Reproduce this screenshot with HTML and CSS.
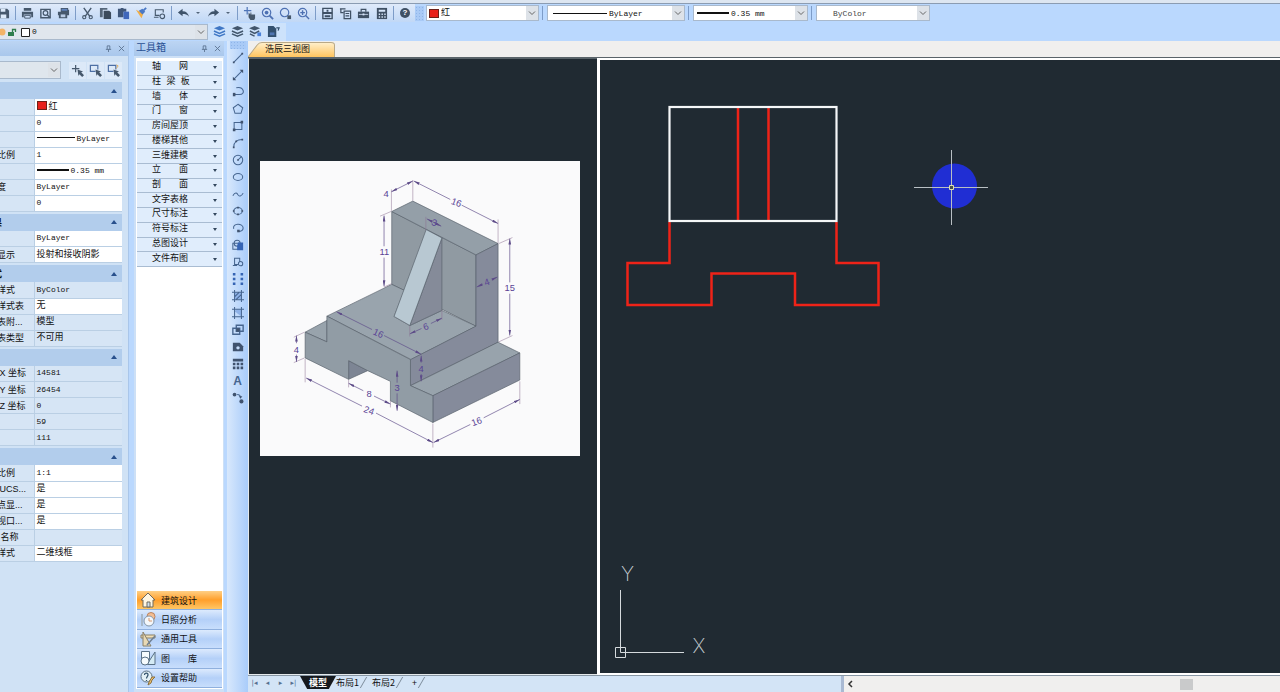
FILE: index.html
```html
<!DOCTYPE html>
<html lang="zh-CN">
<head>
    <meta charset="UTF-8">
    <meta name="viewport" content="width=device-width, initial-scale=1.0">
    <title>浩辰三视图</title>
    <link rel="stylesheet" href="styles.css">
</head>
<body>
    <svg class="defs" aria-hidden="true">
        <symbol id="chevron" viewBox="0 0 8 8"><path d="M1 2.500l3 3 3-3" fill="none" stroke="#666" /></symbol>
        <symbol id="pin" viewBox="0 0 8 8"><path d="M2.500 1h3v4M2.500 1v4M1 5h6M4 5v3" fill="none" stroke="#5a7290" /></symbol>
        <symbol id="close" viewBox="0 0 8 8"><path d="M1 1l6 6M7 1l-6 6" fill="none" stroke="#5a7290" /></symbol>
        <symbol id="layers" viewBox="0 0 14 14"><path d="M7 1l6 2.500L7 6 1 3.500z" fill="currentColor" /><path d="M1 6.500l6 2.500 6-2.500M1 9.500L7 12l6-2.500" fill="none" stroke="currentColor" stroke-width="1.600" /></symbol>
        <marker id="arrow" viewBox="0 0 18 8" refX="18" refY="4" markerWidth="18" markerHeight="9" markerUnits="userSpaceOnUse" orient="auto-start-reverse"><path d="M0 0l18 4-18 4z" fill="#5d4b88" /></marker>
    </svg>

    <header class="topbar">
        <div class="toolbar">
            <div class="tools main-tools">
                <button title="保存"><svg viewBox="0 0 14 14"><path d="M1 2h10l2 2v8H1z" fill="#46586c" /><path d="M4 2h5v3H4zM4 8h6v4H4z" fill="#dce9f8" /></svg></button>
                <i class="sep"></i>
                <button title="打印"><svg viewBox="0 0 14 14"><path d="M3 1h8v3H3zM1 5h12v6h-2V8H3v3H1z" fill="#46586c" /><path d="M4 9h6v3H4z" fill="none" stroke="#46586c" /></svg></button>
                <button title="打印预览"><svg viewBox="0 0 14 14"><path d="M2 2.500h10v9H2z" fill="none" stroke="#46586c" stroke-width="1.500" /><circle cx="7" cy="6.500" r="2.500" fill="none" stroke="#46586c" stroke-width="1.300" /><path d="M9 8.500l3 3" stroke="#46586c" stroke-width="1.500" /></svg></button>
                <button title="发布"><svg viewBox="0 0 14 14"><path d="M4 1h8v2h1v6h-2v3H2V9H1V5h3z" fill="#46586c" /><path d="M5 2h6v2H5z" fill="#5f83bd" /><path d="M4 8h5v3H4z" fill="#b8cbe4" /></svg></button>
                <i class="sep"></i>
                <button title="剪切"><svg viewBox="0 0 14 14"><path d="M3 1l6.500 9M11 1L4.500 10" stroke="#46586c" stroke-width="1.500" /><circle cx="3.500" cy="11" r="1.700" fill="none" stroke="#46586c" stroke-width="1.200" /><circle cx="10.500" cy="11" r="1.700" fill="none" stroke="#46586c" stroke-width="1.200" /></svg></button>
                <button title="复制"><svg viewBox="0 0 14 14"><path d="M1 1h8v2H4v8H1z" fill="#56677a" /><path d="M5 4h6l2 2v7H5z" fill="#3c4b5c" /></svg></button>
                <button title="粘贴"><svg viewBox="0 0 14 14"><path d="M1 2h3V1h3v1h3v3H7v6H1z" fill="#3f5678" /><path d="M7 5h6v8H7z" fill="#3f67bb" /></svg></button>
                <button title="特性匹配"><svg viewBox="0 0 14 14"><path d="M1 3l6 9 2-5z" fill="#f0ad45" /><path d="M4 4l4-2 3 3-3 3z" fill="#4a78c5" /><path d="M9 4l3-3" stroke="#4a78c5" stroke-width="2" /></svg></button>
                <button title="块编辑"><svg viewBox="0 0 14 14"><path d="M7 9H2.500V3H11v3M1 11h5" fill="none" stroke="#46586c" stroke-width="1.200" /><circle cx="10" cy="10" r="2.500" fill="none" stroke="#46586c" stroke-width="1.200" /></svg></button>
                <i class="sep"></i>
                <button title="放弃"><svg viewBox="0 0 14 14"><path d="M1 6l5-4v2.500c4 0 6 2 7 6-2-2.500-4-3-7-3V10z" fill="#3f536a" /></svg></button>
                <button class="more" title="放弃列表"></button>
                <button title="重做"><svg viewBox="0 0 14 14"><path d="M13 6L8 2v2.500c-4 0-6 2-7 6 2-2.500 4-3 7-3V10z" fill="#3f536a" /></svg></button>
                <button class="more" title="重做列表"></button>
                <i class="sep"></i>
                <button title="平移"><svg viewBox="0 0 14 14"><path d="M4.500 0v8M1 4h8" stroke="#4f75b8" stroke-width="1.300" /><path d="M6 6l2 2V6h1v2h4v4l-1 2H8L6 11z" fill="#46586c" /></svg></button>
                <button title="实时缩放"><svg viewBox="0 0 14 14"><circle cx="6" cy="6" r="4.500" fill="none" stroke="#4d70b2" stroke-width="1.300" /><circle cx="6" cy="6" r="2" fill="#4d70b2" /><path d="M9 9l4 4" stroke="#4d70b2" stroke-width="2" /></svg></button>
                <button title="窗口缩放"><svg viewBox="0 0 14 14"><circle cx="6" cy="6" r="4.500" fill="none" stroke="#4d70b2" stroke-width="1.300" /><path d="M9 9h4v4H9z" fill="#46586c" /></svg></button>
                <button title="缩放上一个"><svg viewBox="0 0 14 14"><circle cx="6" cy="6" r="4.500" fill="none" stroke="#4d70b2" stroke-width="1.300" /><path d="M3.500 6h5M6 3.500v5M9 9l4 4" stroke="#4d70b2" stroke-width="1.500" /></svg></button>
                <i class="sep"></i>
                <button title="特性"><svg viewBox="0 0 14 14"><path d="M2 1.500h10v11H2z" fill="none" stroke="#3f5064" stroke-width="1.500" /><path d="M2 6.500h10M4 10h6M6 4h2" stroke="#3f5064" stroke-width="2" /></svg></button>
                <button title="设计中心"><svg viewBox="0 0 14 14"><path d="M1 2h6M2 2v4h3" fill="none" stroke="#3f5064" stroke-width="1.300" /><path d="M5.500 4.500h7v8h-7zM7 7h4M7 9.500h4" fill="none" stroke="#3f5064" stroke-width="1.300" /></svg></button>
                <button title="工具选项板"><svg viewBox="0 0 14 14"><path d="M1 5h12v7H1z" fill="#3f5064" /><path d="M4.500 5V2.500h5V5" fill="none" stroke="#3f5064" stroke-width="1.300" /><path d="M2 8h10" stroke="#d5e4f8" stroke-width=".8" /><path d="M6 7h2v2H6z" fill="#d5e4f8" /></svg></button>
                <button title="计算器"><svg viewBox="0 0 14 14"><path d="M2 1h11v12H2z" fill="#3f5064" /><path d="M4 3h7v2H4zM4 7h1.500v1.500H4zM7 7h1.500v1.500H7zM10 7h1.500v1.500H10zM4 10h1.500v1.500H4zM7 10h1.500v1.500H7zM10 10h1.500v1.500H10z" fill="#d5e4f8" /></svg></button>
                <i class="sep"></i>
                <button class="help" title="帮助"><span>?</span></button>
            </div>
            <i class="grip"></i>
            <label class="combo color-combo"><i class="swatch"></i><select class="cjk" aria-label="颜色"><option>红</option></select><svg><use href="#chevron" /></svg></label>
            <i class="sep"></i>
            <label class="combo type-combo"><i class="line"></i><select aria-label="线型"><option>ByLayer</option></select><svg><use href="#chevron" /></svg></label>
            <i class="sep"></i>
            <label class="combo weight-combo"><i class="line thick"></i><select aria-label="线宽"><option>0.35 mm</option></select><svg><use href="#chevron" /></svg></label>
            <i class="sep"></i>
            <label class="combo style-combo"><select aria-label="打印样式" disabled><option>ByColor</option></select><svg><use href="#chevron" /></svg></label>
        </div>
        <div class="toolbar">
            <label class="combo layer-combo">
                <svg class="layer-state" viewBox="0 0 32 12"><circle cx="2" cy="6" r="3.500" fill="#f3b467" /><path d="M8 6h6v4H8z" fill="#2f7d4c" /><path d="M12.500 6V3.500h3V6" fill="none" stroke="#2f7d4c" stroke-width="1.300" /><path d="M21.500 2.500h8v8h-8z" fill="#fff" stroke="#222" /></svg>
                <select aria-label="图层"><option>0</option></select><svg><use href="#chevron" /></svg>
            </label>
            <div class="tools layer-tools">
                <button class="blue" title="图层特性"><svg><use href="#layers" /></svg></button>
                <button title="图层上一个"><svg><use href="#layers" /></svg></button>
                <button title="图层隔离"><svg viewBox="0 0 14 14"><path d="M6 1l6 2.500L6 6 0 3.500z" fill="#42566c" /><path d="M1 6.500l5 2.500 5-2.500M1 9.500L6 12" fill="none" stroke="#42566c" stroke-width="1.600" /><path d="M9 8h4v4H9z" fill="#4d82d8" /></svg></button>
                <button title="图层状态"><svg viewBox="0 0 14 14"><path d="M1 1h6l3 3v9H1z" fill="#33506e" /><path d="M3 8h5v3H3z" fill="#5076b2" /><path d="M10 3h3l-1 3" fill="none" stroke="#33506e" stroke-width="1.300" /></svg></button>
            </div>
        </div>
    </header>

    <main class="workspace">
        <aside class="properties">
            <div class="panel-title"><span></span><button title="自动隐藏"><svg><use href="#pin" /></svg></button><button title="关闭"><svg><use href="#close" /></svg></button></div>
            <div class="picker">
                <label class="combo object-combo"><select aria-label="对象"><option></option></select><svg><use href="#chevron" /></svg></label>
                <button title="切换选择"><svg viewBox="0 0 14 14"><path d="M5 1v8M1 5h8" stroke="#46586c" stroke-width="1.300" /><path d="M7 6l6 2-2 1 3 3-2 2-3-3-1 2z" fill="#46586c" /></svg></button>
                <button title="选择对象"><svg viewBox="0 0 14 14"><path d="M7 8H1.500V1.500h8V6" fill="none" stroke="#4d6fa4" stroke-width="1.300" /><path d="M7 6l6 2-2 1 3 3-2 2-3-3-1 2z" fill="#46586c" /></svg></button>
                <button title="快速选择"><svg viewBox="0 0 14 14"><path d="M7 8H1.500V1.500h8V6" fill="none" stroke="#4d6fa4" stroke-width="1.300" /><path d="M10 1l2 1-2 3" fill="none" stroke="#e0ae62" /><path d="M7 6l6 2-2 1 3 3-2 2-3-3-1 2z" fill="#46586c" /></svg></button>
            </div>
            <section>
                <button class="section-head">基本</button>
                <table>
                    <tr><th>颜色</th><td class="cjk"><i class="swatch"></i>红</td></tr>
                    <tr><th>图层</th><td>0</td></tr>
                    <tr><th>线型</th><td><i class="line"></i>ByLayer</td></tr>
                    <tr><th>线型比例</th><td>1</td></tr>
                    <tr><th>线宽</th><td><i class="line thick"></i>0.35 mm</td></tr>
                    <tr><th>透明度</th><td>ByLayer</td></tr>
                    <tr><th>厚度</th><td>0</td></tr>
                </table>
            </section>
            <section>
                <button class="section-head">三维效果</button>
                <table>
                    <tr><th>材质</th><td>ByLayer</td></tr>
                    <tr><th>阴影显示</th><td class="cjk">投射和接收阴影</td></tr>
                </table>
            </section>
            <section>
                <button class="section-head">打印样式</button>
                <table>
                    <tr class="locked"><th>打印样式</th><td>ByColor</td></tr>
                    <tr><th>打印样式表</th><td class="cjk">无</td></tr>
                    <tr class="locked"><th>打印表附...</th><td class="cjk">模型</td></tr>
                    <tr class="locked"><th>打印表类型</th><td class="cjk">不可用</td></tr>
                </table>
            </section>
            <section>
                <button class="section-head">视图</button>
                <table>
                    <tr class="locked"><th>圆心 X 坐标</th><td>14581</td></tr>
                    <tr class="locked"><th>圆心 Y 坐标</th><td>26454</td></tr>
                    <tr class="locked"><th>圆心 Z 坐标</th><td>0</td></tr>
                    <tr class="locked"><th>高度</th><td>59</td></tr>
                    <tr class="locked"><th>宽度</th><td>111</td></tr>
                </table>
            </section>
            <section>
                <button class="section-head">其他</button>
                <table>
                    <tr><th>注释比例</th><td>1:1</td></tr>
                    <tr><th>打开 UCS...</th><td class="cjk">是</td></tr>
                    <tr><th>在原点显...</th><td class="cjk">是</td></tr>
                    <tr><th>每个视口...</th><td class="cjk">是</td></tr>
                    <tr class="locked"><th>UCS 名称</th><td></td></tr>
                    <tr><th>视觉样式</th><td class="cjk">二维线框</td></tr>
                </table>
            </section>
        </aside>

        <aside class="toolbox">
            <div class="panel-title"><span>工具箱</span><button title="自动隐藏"><svg><use href="#pin" /></svg></button><button title="关闭"><svg><use href="#close" /></svg></button></div>
            <div class="toolbox-body">
                <div class="menu-list">
                    <button>轴　　网</button>
                    <button>柱 梁 板</button>
                    <button>墙　　体</button>
                    <button>门　　窗</button>
                    <button>房间屋顶</button>
                    <button>楼梯其他</button>
                    <button>三维建模</button>
                    <button>立　　面</button>
                    <button>剖　　面</button>
                    <button>文字表格</button>
                    <button>尺寸标注</button>
                    <button>符号标注</button>
                    <button>总图设计</button>
                    <button>文件布图</button>
                </div>
                <div class="group-list">
                    <button class="active"><svg viewBox="0 0 16 16"><path d="M1 8l7-7 7 7h-2v7H3V8z" fill="#fff6e2" stroke="#6f6a5e" /><path d="M7 15v-5h3v5z" fill="#cfe0ee" stroke="#6f6a5e" /></svg>建筑设计</button>
                    <button><svg viewBox="0 0 16 16"><circle cx="11" cy="4.500" r="4" fill="#f4bd91" stroke="#b98462" /><circle cx="9" cy="9" r="5" fill="#f3f7fb" stroke="#8496a8" /><path d="M2 2v12" stroke="#a8b9ca" stroke-width="2" /><path d="M9 6v3h3" fill="none" stroke="#d79a72" /></svg>日照分析</button>
                    <button><svg viewBox="0 0 16 16"><path d="M1 4h14v3H1z" fill="#f0dfb7" stroke="#8a8069" /><path d="M3 1v14h8z" fill="#e8d9b5" stroke="#8a8069" /><path d="M15 5L7 14" stroke="#6e7f93" stroke-width="1.500" /></svg>通用工具</button>
                    <button><svg viewBox="0 0 16 16"><path d="M1.500 1.500h8v8h-8z" fill="#f6fbfd" stroke="#5a7186" /><path d="M15 2v12.500H7z" fill="#d5ebf5" stroke="#5a7186" /><circle cx="5" cy="11" r="4" fill="#f6fbfd" stroke="#5a7186" /></svg>图　　库</button>
                    <button><svg viewBox="0 0 16 16"><circle cx="6.500" cy="6.500" r="5.500" fill="#e4f1f6" stroke="#5c7182" /><path d="M4.500 5c0-3 4-2 3.500 0S6.500 7 6.500 8.500M6.500 10v1" fill="none" stroke="#35546e" stroke-width="1.200" /><path d="M15 7l-3 3-1 3-3 2 1-3 3-5z" fill="#f0c46f" stroke="#8c7140" /></svg>设置帮助</button>
                </div>
            </div>
        </aside>

        <nav class="draw-tools">
            <i class="grip"></i>
            <button title="直线"><svg viewBox="0 0 14 14"><path d="M2 12L12 2" /><path class="solid" d="M1 11h2v2H1zM11 1h2v2h-2z" /></svg></button>
            <button title="构造线"><svg viewBox="0 0 14 14"><path d="M2 12L12 2" /><path class="solid" d="M1 9v4h4zM9 1h4v4z" /></svg></button>
            <button title="多段线"><svg viewBox="0 0 14 14"><path d="M5 2c9-2 11 8 4 8H3" /><path class="solid" d="M1 8h3v4H1z" /></svg></button>
            <button title="多边形"><svg viewBox="0 0 14 14"><path d="M7 1.500l5.500 4-2 6.500h-7l-2-6.500z" /></svg></button>
            <button title="矩形"><svg viewBox="0 0 14 14"><path d="M2.500 3h9v8h-9z" /><path class="solid" d="M1 10h3v3H1zM10 1h3v3h-3z" /></svg></button>
            <button title="圆弧"><svg viewBox="0 0 14 14"><path d="M2 12c0-6 4-9 10-9" /><path class="solid" d="M1 11h2v2H1zM4 4h2v2H4zM11 2h2v2h-2z" /></svg></button>
            <button title="圆"><svg viewBox="0 0 14 14"><circle cx="7" cy="7" r="5.500" /><path d="M7 7l4-4" /><path class="solid" d="M6 6h2v2H6z" /></svg></button>
            <button title="椭圆"><svg viewBox="0 0 14 14"><ellipse cx="7" cy="7" rx="5.500" ry="4" /></svg></button>
            <button title="样条曲线"><svg viewBox="0 0 14 14"><path d="M1 9c3-5 5-3 6-1s4 2 6-2" /></svg></button>
            <button title="椭圆弧"><svg viewBox="0 0 14 14"><ellipse cx="7" cy="7" rx="5" ry="4" /><path class="solid" d="M6 2h2v2H6zM6 10h2v2H6zM1 6h2v2H1zM11 6h2v2h-2z" /></svg></button>
            <button title="部分椭圆"><svg viewBox="0 0 14 14"><path d="M2 8c-2-7 11-7 11-1 0 3-3 4-6 4" /><path class="solid" d="M6 9h3v3H6z" /></svg></button>
            <button title="插入块"><svg viewBox="0 0 14 14"><circle cx="6" cy="5" r="3.500" /><path d="M1 5h7v7H1z" /><path class="solid blue" d="M7 4h6v9H6V8z" /></svg></button>
            <button title="创建块"><svg viewBox="0 0 14 14"><path d="M9 7V2.500H3V10h4M1 11h5" /><circle cx="10" cy="9" r="2.500" /></svg></button>
            <button title="点"><svg viewBox="0 0 14 14"><path class="solid blue" d="M1 0h3v3H1zM10 0h3v3h-3zM1 5.500h3v3H1zM10 5.500h3v3h-3zM1 11h3v3H1zM10 11h3v3h-3z" /></svg></button>
            <button title="图案填充"><svg viewBox="0 0 14 14"><path class="fill" d="M3 3h8v8H3z" /><path d="M3 0v14M11 0v14M0 2.500h14M0 11.500h14M3 8l5-5M5 11l6-6" /></svg></button>
            <button title="渐变色"><svg viewBox="0 0 14 14"><path class="fill" d="M5 3h6v8L3 5z" /><path d="M3 0v14M11 0v14M0 2.500h14M0 11.500h14" /></svg></button>
            <button title="面域"><svg viewBox="0 0 14 14"><path d="M5 1.500h8v7H5zM1 5h8v7H1z" stroke-width="1.600" /><path class="solid" d="M5 5h4v4H5z" /></svg></button>
            <button title="区域覆盖"><svg viewBox="0 0 14 14"><path class="solid" d="M1 2h8l4 4v6H1z" /><circle class="hole" cx="7" cy="8" r="2" /></svg></button>
            <button title="表格"><svg viewBox="0 0 14 14"><path class="solid" d="M1 1h12v3H1zM1 5.500h3v3H1zM5.500 5.500h3v3h-3zM10 5.500h3v3h-3zM1 10h3v3H1zM5.500 10h3v3h-3zM10 10h3v3h-3z" /></svg></button>
            <button class="letter" title="多行文字">A</button>
            <button title="添加选定对象"><svg viewBox="0 0 14 14"><circle class="solid" cx="3" cy="3" r="2.200" /><circle class="solid" cx="11" cy="11" r="2.400" /><path d="M6 3c3 0 4 1 4 4" /><path class="solid" d="M8 5h4l-2 3z" /></svg></button>
        </nav>

        <div class="document">
            <div class="doc-tabs">
                <button class="doc-tab"><svg viewBox="0 0 87 14" preserveAspectRatio="none"><defs><linearGradient id="tabFill" x2="0" y2="1"><stop offset="0" stop-color="#fff0cd" /><stop offset="1" stop-color="#ffc45e" /></linearGradient></defs><path d="M0 14L9 3Q11 .5 14 .5H83Q86.500.5 86.500 3V14" fill="url(#tabFill)" stroke="#b9a987" /></svg><span>浩辰三视图</span></button>
            </div>
            <div class="canvas">
                <div class="viewport reference">
                    <svg class="solid-view" viewBox="-87 -27 957 882">
                        <g stroke="#59616c" stroke-width="2" stroke-linejoin="round">
                            <path d="M48 485L113 450V514z" fill="#98a3ac" />
                            <path d="M178 570L235 600L178 626z" fill="#7d8594" />
                            <path d="M307 124L559 254V467L307 342z" fill="#909aa2" />
                            <path d="M307 124L370 93L625 220L559 254z" fill="#949fa8" />
                            <path d="M113 437L307 342L345 360L314 438L361 465L457 420L559 467L365 567z" fill="#99a4ad" />
                            <path d="M314 438L345 360L457 420L361 465z" fill="#99a4ad" stroke="none" />
                            <path d="M559 254L625 220V515L363 645V567L559 467z" fill="#858b9b" />
                            <path d="M363 645L625 515L690 547L430 675z" fill="#98a3ac" />
                            <path d="M430 675L690 547V628L430 755z" fill="#858b9b" />
                            <path d="M48 485L113 514V437L363 567V645L430 675V755L303 690V632L235 600L178 570V626L48 562z" fill="#919ca5" />
                            <path d="M457 203V420L361 465z" fill="#858b99" />
                            <path d="M410 178L457 203L361 465L314 438z" fill="#b8c8d2" />
                        </g>
                        <path class="extension" d="M306 122V58M370 92V30M625 218V148M627 220L668 202M627 514L668 495M272 138L305 124M284 350L306 340M48 565V635M430 758V830M690 632V700M14 500L46 485M14 576L46 562M178 628V650M303 690V710M409 180V140M361 467V498M457 420V448" />
                        <g class="dimension">
                            <path d="M306 65L370 33" />
                            <path d="M373 33L482 88M516 105L625 160" />
                            <path d="M284 136V228M284 262V348" />
                            <path d="M660 205V336M660 370V495" />
                            <path d="M51 622L218 706M260 727L430 815" />
                            <path d="M432 815L542 761M582 741L690 686" />
                            <path d="M22 495V518M22 552V574" />
                            <path d="M178 638L222 660M254 676L303 700" />
                            <path d="M142 424L248 477M284 495L395 551" />
                            <path d="M395 555V576M395 610V632" />
                            <path d="M361 490L396 474M424 459L457 443" />
                            <path d="M561 350L580 341M606 328L623 320" />
                            <path d="M412 146L455 168" />
                            <path d="M323 600V636M323 668V720" />
                        </g>
                        <g class="dim-text">
                            <text x="290" y="82">4</text>
                            <text transform="translate(497 106) rotate(20)">16</text>
                            <text x="285" y="254">11</text>
                            <text x="660" y="362">15</text>
                            <text transform="translate(595 344) rotate(-20)">4</text>
                            <text transform="translate(431 166) rotate(20)">3</text>
                            <text transform="translate(412 477) rotate(-20)">6</text>
                            <text transform="translate(263 497) rotate(25)">16</text>
                            <text x="22" y="546">4</text>
                            <text x="395" y="604">4</text>
                            <text x="323" y="662">3</text>
                            <text x="239" y="680">8</text>
                            <text transform="translate(236 728) rotate(20)">24</text>
                            <text transform="translate(564 761) rotate(-20)">16</text>
                        </g>
                    </svg>
                </div>
                <div class="viewport model">
                    <svg class="drawing">
                        <g fill="none" stroke="#ee2318" stroke-width="2.500">
                            <path d="M138 47V161M168.500 47V161" />
                            <path d="M69.500 162V203H27.500V245H111.500V213.500H195V245H278.500V203H236.500V162" />
                        </g>
                        <rect x="69.500" y="47" width="167" height="114" fill="none" stroke="#f5f7f8" stroke-width="2.200" />
                        <circle cx="354.500" cy="126" r="22.500" fill="#202ed3" />
                        <path d="M314 127.500H388M351.500 90V165" stroke="#b9c0c4" />
                        <path d="M349.500 125.500h4v4h-4z" fill="#46504f" stroke="#dedfae" />
                    </svg>
                    <svg class="ucs" viewBox="0 0 100 100">
                        <path d="M5.500 80.500h10v10h-10zM10.500 85.500V23M10.500 85.500H74" fill="none" stroke="#d5dadd" />
                        <text x="17.500" y="14">Y</text>
                        <text x="89" y="86">X</text>
                    </svg>
                </div>
            </div>
            <footer class="statusbar">
                <div class="layout-tabs">
                    <button class="nav-arrow">|◂</button><button class="nav-arrow">◂</button><button class="nav-arrow">▸</button><button class="nav-arrow">▸|</button>
                    <button class="layout current">模型</button>
                    <button class="layout">布局1</button>
                    <button class="layout">布局2</button>
                    <button class="layout add">+</button>
                </div>
                <div class="scrollbar">
                    <button title="向左滚动"><svg viewBox="0 0 8 8"><path d="M6 1L3 4l3 3" fill="none" stroke="#333" stroke-width="1.500" /></svg></button>
                    <i class="thumb"></i>
                </div>
            </footer>
        </div>
    </main>
</body>
</html>
```
FILE: styles.css
```css
*, *::before, *::after {
    box-sizing: border-box;
}

body {
    margin: 0;
    height: 100vh;
    display: flex;
    flex-direction: column;
    overflow: hidden;
    background-color: #bad8fe;
    font: 8px "Liberation Mono", "Noto Sans CJK SC", monospace;
    color: #111;
}

button {
    padding: 0;
    border: 0;
    background: none;
    font: inherit;
    color: inherit;
}

i {
    font-style: normal;
    flex: none;
}

.defs {
    position: absolute;
    width: 0;
    height: 0;
}

/* toolbars */
.topbar {
    flex: none;
    border-top: 3px solid #dde6f1;
}

.toolbar {
    display: flex;
    align-items: center;
    height: 19px;
}

.toolbar:first-child {
    border-top: 1px solid #8b9cb2;
}

.tools {
    display: flex;
    align-items: center;
    height: 18px;
    background-image: linear-gradient(#dfeafa, #c1d8f6);
}

.tools button {
    width: 18px;
    height: 16px;
    color: #42566c;
}

.tools button.blue {
    color: #3f77c5;
}

.tools svg {
    width: 13px;
    height: 13px;
    display: block;
    margin: 0 auto;
}

.main-tools {
    padding-right: 1px;
    margin-left: -6px;
}

.tools button.more {
    width: 12px;
}

.more::after {
    content: "";
    display: block;
    margin: 0 auto;
    width: 0;
    border: 2px solid transparent;
    border-top-color: #53657a;
    border-bottom: 0;
}

.tools .help span {
    display: block;
    width: 10px;
    height: 10px;
    margin: 0 auto;
    border-radius: 50%;
    background-color: #3f5064;
    color: #fff;
    font: bold 8px/10px "Liberation Sans", sans-serif;
}

.sep {
    width: 6px;
    height: 14px;
    background: linear-gradient(#7d9cc8, #7d9cc8) center / 1px 100% no-repeat;
}

.grip {
    width: 9px;
    height: 15px;
    background-color: #a9caf6;
    background-image: radial-gradient(#8fb5e8 1px, transparent 1px);
    background-size: 3px 3px;
}

.combo {
    display: flex;
    align-items: center;
    height: 16px;
    border: 1px solid #a9b9cc;
    background-color: #fff;
}

.combo select {
    flex: 1;
    min-width: 0;
    padding: 0;
    border: 0;
    appearance: none;
    background: none;
    font: inherit;
    color: inherit;
}

.combo select.cjk,
.cjk {
    font-size: 9px;
}

.combo > svg:last-child {
    flex: none;
    width: 12px;
    height: 14px;
    padding: 2px;
    background-color: #dde2e8;
}

.swatch {
    display: inline-block;
    width: 10px;
    height: 9px;
    margin-right: 2px;
    border: 1px solid #6d2018;
    background-color: #e8201a;
    vertical-align: -1px;
}

.line {
    display: inline-block;
    width: 38px;
    height: 1px;
    margin-right: 2px;
    background-color: #111;
    vertical-align: 3px;
}

.line.thick {
    width: 32px;
    height: 2px;
    vertical-align: 2px;
}

.color-combo {
    width: 113px;
    margin-left: 2px;
    padding-left: 2px;
}

.type-combo {
    width: 138px;
    margin-left: 2px;
    padding-left: 5px;
}

.type-combo .line {
    width: 54px;
}

.weight-combo {
    width: 115px;
    margin-left: 2px;
    padding-left: 3px;
}

.style-combo {
    width: 114px;
    margin-left: 2px;
    padding-left: 16px;
    color: #444;
}

.combo select:disabled {
    opacity: 1;
}

.layer-combo {
    width: 208px;
    border-left: 0;
    background-color: #e0e6ed;
}

.layer-combo .layer-state {
    flex: none;
    width: 32px;
    height: 12px;
}

.layer-tools {
    padding: 0 4px 0 2px;
    background-image: none;
    background-color: #cde2fb;
}

/* docked panels */
.workspace {
    flex: 1;
    display: flex;
    min-height: 0;
}

.panel-title {
    display: flex;
    align-items: center;
    height: 15px;
    margin-bottom: 2px;
    background-image: linear-gradient(#bcd5f3, #a9c7ec);
    color: #284f93;
    font-size: 10px;
    line-height: 14px;
}

.panel-title span {
    flex: 1;
    padding-left: 2px;
}

.panel-title button {
    width: 13px;
    height: 13px;
}

.panel-title svg {
    width: 7px;
    height: 7px;
    display: block;
    margin: 0 auto;
}

.properties {
    flex: none;
    width: 163px;
    margin-left: -34px;
    border-right: 1px solid #a9c6ea;
    background-color: #d0e2f5;
}

.picker {
    display: flex;
    align-items: center;
    height: 24px;
}

.picker button {
    width: 17px;
    height: 17px;
    margin-right: 1px;
    background-color: #dce9f8;
}

.picker button svg {
    display: block;
    width: 13px;
    height: 13px;
    margin: 0 auto;
}

.object-combo {
    width: 95px;
    height: 18px;
    margin-right: 8px;
    background-color: #dfe6ed;
}

.properties section {
    width: 156px;
    margin-bottom: 2px;
}

.section-head {
    display: flex;
    align-items: center;
    justify-content: space-between;
    width: 100%;
    height: 17px;
    padding-right: 5px;
    background-color: #b2cdec;
    font-size: 9px;
    font-weight: bold;
}

.section-head::after {
    content: "";
    border: 3px solid transparent;
    border-bottom: 4px solid #28508c;
    border-top: 0;
}

.properties table {
    width: 100%;
    table-layout: fixed;
    border-collapse: collapse;
}

.properties tr {
    height: 16px;
}

.properties th,
.properties td {
    padding: 0;
    border-bottom: 1px solid #bacfe4;
    line-height: 14px;
    text-align: left;
    white-space: nowrap;
}

.properties th {
    width: 68px;
    padding-left: 13px;
    border-right: 1px solid #bacfe4;
    font-family: "Liberation Sans", "Noto Sans CJK SC", sans-serif;
    font-size: 9px;
    font-weight: normal;
    background-color: #d6e5f5;
}

.properties td {
    padding-left: 2px;
    background-color: #fff;
}

.properties .locked td {
    background-color: #d6e5f5;
}

.toolbox {
    flex: none;
    display: flex;
    flex-direction: column;
    width: 90px;
    margin-left: 5px;
    padding-bottom: 3px;
    background-color: #cde0f6;
}

.toolbox-body {
    flex: 1;
    display: flex;
    flex-direction: column;
    justify-content: space-between;
    margin: 0 1px 0 2px;
    padding: 3px 1px 1px;
    background-color: #fff;
    font-size: 9px;
}

.menu-list {
    display: grid;
    grid-template-rows: repeat(14, 1fr);
    height: 206px;
}

.menu-list button {
    display: flex;
    align-items: center;
    justify-content: space-between;
    padding: 0 5px 0 15px;
    border-bottom: 1px solid #a9bcd2;
    background-color: #e0edfc;
    line-height: 13px;
    white-space: pre;
}

.menu-list button::after {
    content: "";
    border: 2px solid transparent;
    border-top: 3px solid #33475e;
    border-bottom: 0;
}

.group-list {
    display: grid;
    grid-template-rows: repeat(5, 1fr);
    height: 97px;
}

.group-list button {
    display: flex;
    align-items: center;
    gap: 5px;
    padding-left: 3px;
    border-bottom: 1px solid #8fb0de;
    background-image: linear-gradient(#dceafd, #b4d0f8 50%, #c8defc);
    white-space: pre;
}

.group-list .active {
    background-image: linear-gradient(#ffcf85, #ff9f2b 50%, #ffc665);
}

.group-list svg {
    width: 16px;
    height: 16px;
}

.draw-tools {
    flex: none;
    display: flex;
    flex-direction: column;
    align-items: center;
    width: 21px;
    margin-left: 3px;
    background-image: linear-gradient(to right, #d8e8fc, #a9ccfa);
}

.draw-tools .grip {
    width: 16px;
    height: 8px;
}

.draw-tools button {
    width: 17px;
    height: 17px;
    color: #46658f;
}

.draw-tools svg {
    display: block;
    width: 12px;
    height: 12px;
    margin: 0 auto;
    fill: none;
    stroke: #46658f;
    stroke-width: 1.2;
}

.draw-tools .solid {
    fill: #40536f;
    stroke: none;
}

.draw-tools .blue {
    fill: #3564b4;
}

.draw-tools .fill {
    fill: #8eb2e8;
    stroke: none;
}

.draw-tools .hole {
    fill: #c4dcfa;
    stroke: none;
}

.draw-tools .letter {
    font: bold 12px "Liberation Sans", sans-serif;
}

/* drawing area */
.document {
    flex: 1;
    display: flex;
    flex-direction: column;
    min-width: 0;
    background-color: #f0efee;
}

.doc-tabs {
    height: 16px;
    padding-top: 1px;
    flex: none;
}

.doc-tab {
    position: relative;
    display: block;
    width: 87px;
    height: 15px;
}

.doc-tab svg {
    position: absolute;
    inset: 0;
    width: 100%;
    height: 100%;
}

.doc-tab span {
    position: relative;
    display: block;
    padding-left: 17px;
    font-size: 9px;
    line-height: 14px;
    text-align: left;
}

.canvas {
    flex: 1;
    display: grid;
    grid-template-columns: minmax(0, 349fr) minmax(0, 683fr);
    min-height: 0;
    border-top: 1px solid #596369;
}

.viewport {
    background-color: #202a32;
}

.reference {
    padding: 102px 17px 0 11px;
    border: 1px solid #e4e9ec;
    border-right: 0;
    border-top: 1px solid #596369;
}

.solid-view {
    display: block;
    width: 100%;
    background-color: #fafafb;
}

.extension {
    fill: none;
    stroke: #8b6f91;
    stroke-width: 1.5;
}

.dimension path {
    fill: none;
    stroke: #5d4b88;
    stroke-width: 2;
    marker-start: url(#arrow);
    marker-end: url(#arrow);
}

.dim-text {
    font: 28px "Liberation Sans", sans-serif;
    fill: #594395;
    text-anchor: middle;
}

.model {
    position: relative;
    border: 2px solid #fff;
    border-left-width: 3px;
    border-right: 0;
}

.drawing {
    display: block;
    width: 100%;
    height: 100%;
}

.ucs {
    position: absolute;
    left: 10px;
    bottom: 6px;
    width: 100px;
    height: 100px;
    overflow: visible;
}

.ucs text {
    font: 200 20px Inter, sans-serif;
    fill: #c3cacf;
    text-anchor: middle;
}

.statusbar {
    flex: none;
    display: flex;
    height: 17px;
    border-top: 1px solid #8796a4;
}

.layout-tabs {
    flex: 595 1 0;
    display: flex;
    border-right: 3px solid #a9b9d2;
    background-color: #d3e4f6;
}

.layout-tabs button {
    height: 13px;
}

.nav-arrow {
    width: 13px;
    font: 7px "DejaVu Sans", sans-serif;
    color: #56708f;
}

.layout {
    display: flex;
    align-items: center;
    width: 36px;
    font: 9px/12px "Noto Sans CJK SC", sans-serif;
    white-space: nowrap;
}

.layout:not(.current)::after {
    content: "";
    height: 11px;
    margin-left: 4px;
    border-left: 1px solid #7c8b9a;
    transform: skewX(-30deg);
}

.layout-tabs .current {
    justify-content: center;
    background-color: #15191e;
    color: #fff;
    font-weight: bold;
    clip-path: polygon(0 0, 100% 0, 80% 100%, 20% 100%);
}

.layout-tabs .add {
    padding-left: 4px;
}

.add::after {
    padding-left: 8px;
}

.scrollbar {
    flex: 437 1 0;
    display: flex;
    align-items: center;
}

.scrollbar button {
    width: 12px;
    height: 12px;
}

.scrollbar svg {
    display: block;
    width: 8px;
    height: 8px;
    margin: 0 auto;
}

.thumb {
    width: 13px;
    height: 11px;
    margin-left: auto;
    margin-right: 20%;
    background-color: #c9cacb;
}
```
